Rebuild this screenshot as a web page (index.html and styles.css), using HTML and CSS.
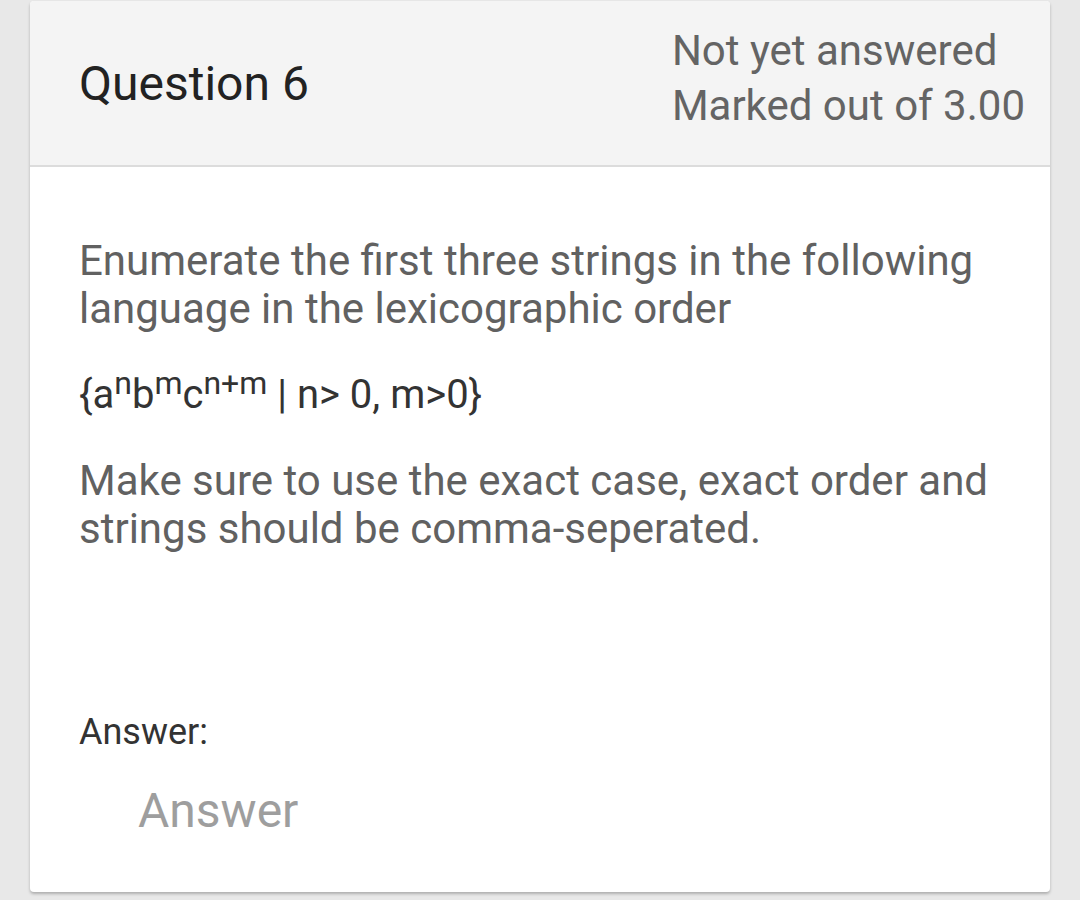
FILE: index.html
```html
<!DOCTYPE html>
<html>
<head>
<meta charset="utf-8">
<link rel="stylesheet" href="styles.css">
</head>
<body>
<div class="card">
  <div class="card-head">
    <div class="qno">Question 6</div>
    <div class="state">
      <div>Not yet answered</div>
      <div>Marked out of 3.00</div>
    </div>
  </div>
  <div class="card-body">
    <p class="text">Enumerate the first three strings in the following language in the lexicographic order</p>
    <p class="formula">{a<sup>n</sup>b<sup>m</sup>c<sup>n+m</sup> | n&gt; 0, m&gt;0}</p>
    <p class="text">Make sure to use the exact case, exact order and strings should be comma-seperated.</p>
    <div class="answer-label">Answer:</div>
    <input class="answer-input" type="text" placeholder="Answer">
  </div>
</div>
</body>
</html>
```
FILE: styles.css
```css
html, body {
  margin: 0;
  padding: 0;
  background: #e8e8e8;
  font-family: Roboto, "Liberation Sans", sans-serif;
}
body {
  padding: 1px 30px 0 30px;
  height: 900px;
  box-sizing: border-box;
}
.card {
  background: #fff;
  border-radius: 4px;
  box-shadow: 0 2px 3px rgba(0,0,0,0.25);
  overflow: hidden;
}
.card-head {
  background: #f4f4f4;
  border-bottom: 2px solid #dcdcdc;
  height: 166px;
  box-sizing: border-box;
  display: flex;
  align-items: center;
  justify-content: space-between;
  padding: 0 25px 0 49px;
}
.qno {
  font-size: 48px;
  color: #222;
}
.state {
  font-size: 42px;
  line-height: 55px;
  color: #646464;
  margin-bottom: 10px;
}
.card-body {
  padding: 70px 40px 0 49px;
  height: 725px;
  box-sizing: border-box;
}
.text {
  font-size: 42px;
  line-height: 48px;
  color: #616161;
  margin: 0 0 38px 0;
}
.formula {
  font-size: 40px;
  line-height: 48px;
  color: #333;
  margin: 0 0 38px 0;
}
.formula sup {
  font-size: 32px;
  line-height: 0;
  vertical-align: 14px;
}
.answer-label {
  margin-top: 159px;
  font-size: 36px;
  line-height: 40px;
  color: #333;
}
.answer-input {
  display: block;
  margin: 30px 0 0 59px;
  border: none;
  outline: none;
  background: transparent;
  font-family: Roboto, "Liberation Sans", sans-serif;
  font-size: 48px;
  padding: 0;
  width: 600px;
  color: #333;
}
.answer-input::placeholder {
  color: #9e9e9e;
}
```
